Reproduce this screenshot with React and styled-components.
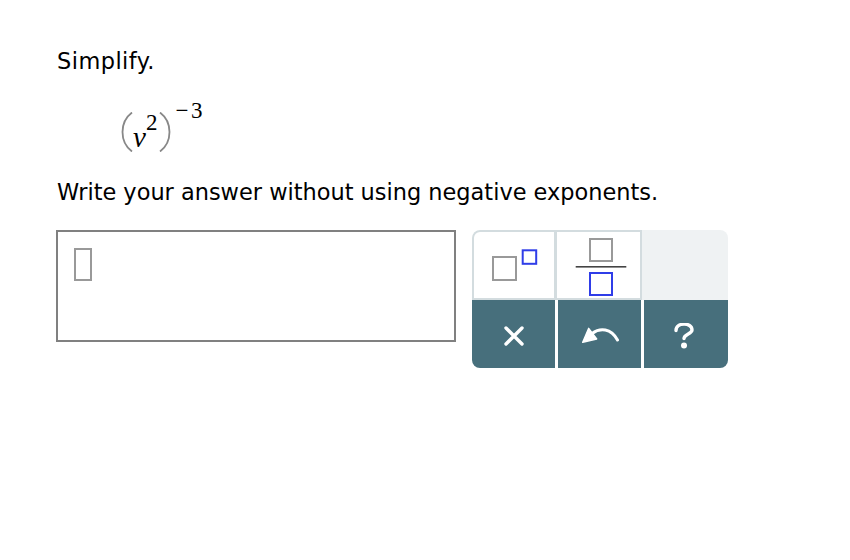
import React from "react";
import styled, { createGlobalStyle } from "styled-components";

const Global = createGlobalStyle`
  html, body { margin: 0; padding: 0; background: #fff; }
  body { font-family: "DejaVu Sans", Verdana, sans-serif; color: #000; }
`;

const Page = styled.main`
  width: 850px;
  height: 560px;
  box-sizing: border-box;
  padding: 47px 0 0 57px;
`;

const Prompt = styled.p`
  margin: 0;
  font-size: 22.45px;
  line-height: 28px;
  letter-spacing: ${(p) => p.$tracking || 0}px;
`;

const Formula = styled.div`
  display: flex;
  align-items: flex-start;
  height: 56px;
  margin: 22px 0 25px 63px;
  font-family: "Liberation Serif", "Times New Roman", serif;
  color: #000;
`;

const Paren = styled.svg`
  width: 13px;
  height: 40px;
  margin-top: 15px;
  flex: none;
`;

const Base = styled.span`
  font-size: 29px;
  font-style: italic;
  line-height: 30px;
  margin-top: 25px;
`;

const Square = styled.span`
  font-size: 23px;
  line-height: 23px;
  margin: 14px 1px 0 0;
`;

const Exponent = styled.span`
  font-size: 23px;
  line-height: 23px;
  margin: 2px 0 0 4px;
  word-spacing: -3px;
`;

const Work = styled.div`
  display: flex;
  gap: 16px;
  margin: 24px 0 0 -1px;
`;

const AnswerBox = styled.div`
  box-sizing: border-box;
  width: 400px;
  height: 112px;
  border: 2px solid #808080;
  padding: 16px 0 0 16px;
`;

const Slot = styled.span`
  display: block;
  box-sizing: border-box;
  width: 18px;
  height: 33px;
  border: 2px solid #999;
`;

const Keypad = styled.div`
  width: 256px;
  height: 138px;
  display: grid;
  grid-template-rows: 70px 68px;
  border-radius: 8px;
  overflow: hidden;
`;

const TemplateRow = styled.div`
  display: grid;
  grid-template-columns: 84px 86px 86px;
  background: #eff2f3;
`;

const TemplateKey = styled.button`
  box-sizing: border-box;
  margin: 0;
  padding: 0;
  background: #fff;
  border: 2px solid #d3dcdf;
  border-left-width: ${(p) => (p.$first ? 2 : 1)}px;
  border-top-left-radius: ${(p) => (p.$first ? 8 : 0)}px;
  display: flex;
  align-items: center;
  justify-content: center;
`;

const ActionRow = styled.div`
  display: grid;
  grid-template-columns: 83px 86px 87px;
  background: #476f7c;
`;

const ActionKey = styled.button`
  margin: 0;
  padding: 4px ${(p) => p.$inset || 0}px 0 0;
  background: transparent;
  border: 0;
  border-left: ${(p) => (p.$divider ? "3px solid #fff" : "0")};
  display: flex;
  align-items: center;
  justify-content: center;
  color: #fff;
`;

const Glyph = styled.svg`
  display: block;
`;

export default function App() {
  return (
    <Page>
      <Global />
      <Prompt $tracking={0.45}>Simplify.</Prompt>
      <Formula>
        <Paren viewBox="0 0 13 40">
          <path d="M12 0.5 C6 5 2.5 12 2.5 20 C2.5 28 6 35 12 39.5" fill="none" stroke="#888" strokeWidth="1.8" />
        </Paren>
        <Base>v</Base>
        <Square>2</Square>
        <Paren viewBox="0 0 13 40">
          <path d="M2 0.5 C8 5 11.5 12 11.5 20 C11.5 28 8 35 2 39.5" fill="none" stroke="#888" strokeWidth="1.8" />
        </Paren>
        <Exponent>− 3</Exponent>
      </Formula>
      <Prompt>Write your answer without using negative exponents.</Prompt>
      <Work>
        <AnswerBox>
          <Slot />
        </AnswerBox>
        <Keypad>
          <TemplateRow>
            <TemplateKey $first aria-label="exponent">
              <Glyph width="80" height="66" viewBox="0 0 80 66">
                <rect x="19" y="25" width="23" height="23" fill="none" stroke="#999" strokeWidth="2" />
                <rect x="48.7" y="18.3" width="13.5" height="13.5" fill="none" stroke="#2f3de8" strokeWidth="2" />
              </Glyph>
            </TemplateKey>
            <TemplateKey aria-label="fraction">
              <Glyph width="83" height="66" viewBox="0 0 83 66">
                <rect x="33" y="7" width="22" height="22" fill="none" stroke="#999" strokeWidth="2" />
                <rect x="18.7" y="34" width="50.6" height="1.6" fill="#444" />
                <rect x="33" y="41" width="22" height="22" fill="none" stroke="#2f3de8" strokeWidth="2" />
              </Glyph>
            </TemplateKey>
          </TemplateRow>
          <ActionRow>
            <ActionKey aria-label="clear">
              <Glyph width="20" height="20" viewBox="0 0 20 20">
                <path d="M2 2 L18 18 M18 2 L2 18" stroke="#fff" strokeWidth="3.4" strokeLinecap="round" />
              </Glyph>
            </ActionKey>
            <ActionKey $divider aria-label="undo">
              <Glyph width="38" height="20" viewBox="0 0 38 20">
                <path d="M11 7.5 C19 1.5 30 2 36.5 14" fill="none" stroke="#fff" strokeWidth="3" strokeLinecap="round" />
                <path d="M1.7 16.3 L7.7 2.3 L15.7 13 Z" fill="#fff" stroke="#fff" strokeWidth="1.4" strokeLinejoin="round" />
              </Glyph>
            </ActionKey>
            <ActionKey $divider $inset={4} aria-label="help">
              <Glyph width="20" height="26" viewBox="0 0 20 26">
                <path d="M2 7.5 C2 -1 18 -1 18 7 C18 11 10 11 10 15.5" fill="none" stroke="#fff" strokeWidth="3.4" strokeLinecap="round" />
                <circle cx="10" cy="22.5" r="3" fill="#fff" />
              </Glyph>
            </ActionKey>
          </ActionRow>
        </Keypad>
      </Work>
    </Page>
  );
}
